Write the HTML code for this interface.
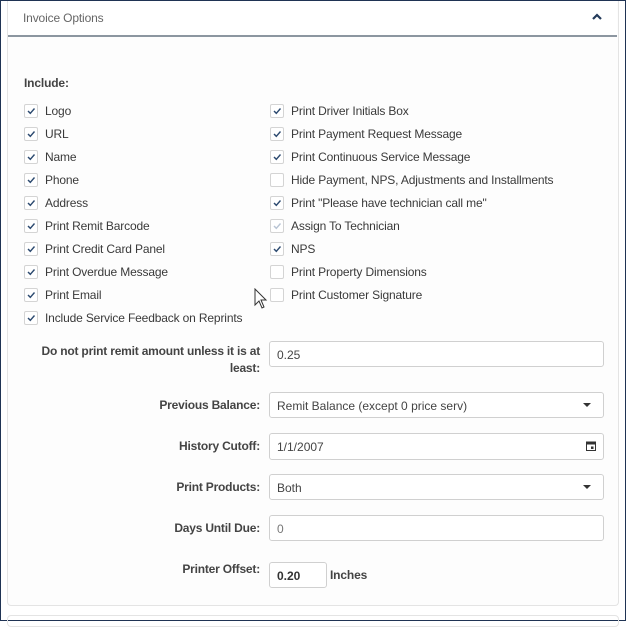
<!DOCTYPE html><html><head><style>
body{margin:0;width:626px;height:621px;background:#fff;font-family:"Liberation Sans",sans-serif;font-size:12px;color:#3a3a3a;position:relative;overflow:hidden}
.frame{position:absolute;left:0;top:0;width:624px;height:619px;border:1px solid #1f3354}
.panel{position:absolute;left:7px;top:1px;width:610px;height:604px;border:1px solid #e4e4e4;border-top:none;border-radius:0 0 4px 4px;background:#fdfdfd}
.hdr{position:absolute;left:8px;top:1px;width:609px;height:34px;background:#fff;border-bottom:2px solid #8c96a0}
.p2{position:absolute;left:7px;top:615px;width:610px;height:10px;border:1px solid #e4e4e4;border-radius:4px}
.a{position:absolute;white-space:nowrap;letter-spacing:-0.15px}
.cb{position:absolute;width:12px;height:12px;border:1px solid #d4d4d4;border-radius:2px;background:#fff}
.cb svg{position:absolute;left:1px;top:1px}
.lbl{position:absolute;right:366px;text-align:right;font-weight:bold;color:#444;font-size:12px;line-height:17px;letter-spacing:-0.2px}
.in{position:absolute;left:269px;width:335px;height:25px;border:1px solid #d0d0d0;border-radius:3px;background:#fff;box-sizing:border-box;padding:6px 0 0 7px;color:#444}
</style></head><body>
<div class="frame"></div>
<div class="panel"></div>
<div class="hdr"></div>
<div class="p2"></div>
<div class="a" style="left:23px;top:11px;color:#666;font-size:12px">Invoice Options</div>
<svg class="a" style="left:591px;top:12px" width="12" height="9" viewBox="0 0 12 9"><path d="M2 7 L6 3 L10 7" stroke="#233a5a" stroke-width="2.2" fill="none"/></svg>
<div class="a" style="left:24px;top:76px;font-weight:bold;color:#444">Include:</div>
<div id="cbs"></div>
<div class="lbl" style="top:343px;width:240px">Do not print remit amount unless it is at least:</div>
<div class="in" style="top:341px;height:26px">0.25</div>
<div class="lbl" style="top:397px">Previous Balance:</div>
<div class="in" style="top:392px;height:26px">Remit Balance (except 0 price serv)</div>
<div class="a" style="left:583px;top:403px;border:4px solid transparent;border-top:4px solid #333;border-bottom:none"></div>
<div class="lbl" style="top:438px">History Cutoff:</div>
<div class="in" style="top:433px;height:27px">1/1/2007</div>
<svg class="a" style="left:586px;top:441px" width="10" height="10"><rect x="0.5" y="1" width="9" height="8.5" fill="none" stroke="#333"/><rect x="0.5" y="1" width="9" height="2.5" fill="#333"/><rect x="5" y="5.5" width="2.5" height="2.5" fill="#333"/></svg>
<div class="lbl" style="top:479px">Print Products:</div>
<div class="in" style="top:474px;height:26px">Both</div>
<div class="a" style="left:583px;top:485px;border:4px solid transparent;border-top:4px solid #333;border-bottom:none"></div>
<div class="lbl" style="top:520px">Days Until Due:</div>
<div class="in" style="top:515px;height:26px;color:#777">0</div>
<div class="lbl" style="top:561px">Printer Offset:</div>
<div class="in" style="top:562px;width:58px;height:26px;font-weight:bold;color:#333">0.20</div>
<div class="a" style="left:330px;top:568px;font-weight:bold;color:#444">Inches</div>
<svg class="a" style="left:254px;top:288px" width="14" height="22"><path d="M1 1 L1 17 L5 13 L8 20 L10 19 L7 12 L12 12 Z" fill="#fff" stroke="#333"/></svg>
<script>
var L=[["Logo",1],["URL",1],["Name",1],["Phone",1],["Address",1],["Print Remit Barcode",1],["Print Credit Card Panel",1],["Print Overdue Message",1],["Print Email",1],["Include Service Feedback on Reprints",1]];
var R=[["Print Driver Initials Box",1],["Print Payment Request Message",1],["Print Continuous Service Message",1],["Hide Payment, NPS, Adjustments and Installments",0],["Print \"Please have technician call me\"",1],["Assign To Technician",2],["NPS",1],["Print Property Dimensions",0],["Print Customer Signature",0]];
var h="";
function add(arr,cx,tx){arr.forEach(function(e,i){var y=104+i*23;
h+='<div class="cb" style="left:'+cx+'px;top:'+y+'px">'+(e[1]?'<svg width="10" height="10"><path d="M2 5 L4.3 7.3 L8.5 2.5" stroke="'+(e[1]==2?'#b8c4d4':'#2c4a70')+'" stroke-width="1.4" fill="none"/></svg>':'')+'</div>';
h+='<div class="a" style="left:'+tx+'px;top:'+y+'px">'+e[0].replace(/"/g,'&quot;')+'</div>';});}
add(L,24,45);add(R,270,291);
document.getElementById("cbs").innerHTML=h;
</script>
</body></html>
